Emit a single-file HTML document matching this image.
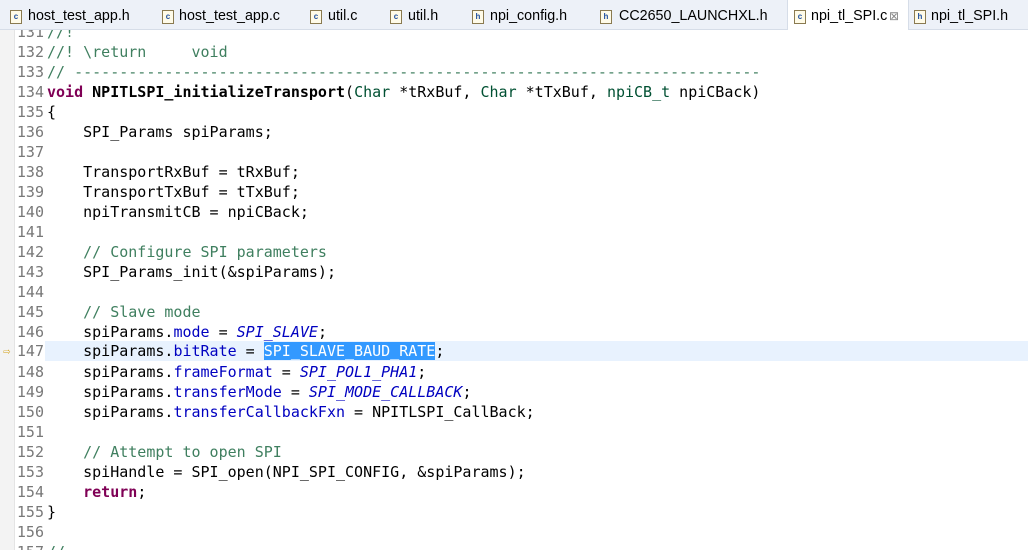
<!DOCTYPE html>
<html><head><meta charset="utf-8"><style>
body{margin:0;width:1028px;height:550px;overflow:hidden;background:#fff;position:relative;font-family:"DejaVu Sans Mono",monospace}
.tabs{position:absolute;left:0;top:0;width:1028px;height:29px;background:#edf1f8;border-bottom:1px solid #d6dde8}
.tab{position:absolute;top:0;height:29px;font:14.3px "Liberation Sans",sans-serif;color:#000;line-height:33px}
.ic{position:absolute;top:10px;width:10px;height:12px;border:1px solid #8a7a50;background:#fffbe8;font:bold 8px "Liberation Sans";line-height:12px;text-align:center;color:#2050a0}
.active{background:#fff;height:30px;border-left:1px solid #d6dde8;border-right:1px solid #d6dde8}
.ed{position:absolute;left:0;top:30px;width:1028px;height:520px;overflow:hidden}
.gut{position:absolute;left:0;top:0;width:14px;height:520px;background:#f3f3f3;border-right:1px solid #e4e4e4}
.l{position:absolute;left:0;height:20px;line-height:20px;font-size:15px;white-space:pre;width:1028px}
.n{position:absolute;left:16px;width:28px;text-align:right;color:#787878}
.c{position:absolute;left:47px;color:#000}
.cm{color:#3f7f5f}.kw{color:#7f0055;font-weight:bold}.ty{color:#005032}.m{color:#0000c0;font-style:italic}.f{color:#0000c0}
.sel{background:#3399ff;color:#fff}
</style></head><body>
<div class="tabs">
<div class="tab" style="left:0"><span class="ic" style="left:10px">c</span><span style="position:absolute;left:28px">host_test_app.h</span></div>
<div class="tab" style="left:152px"><span class="ic" style="left:10px">c</span><span style="position:absolute;left:27px">host_test_app.c</span></div>
<div class="tab" style="left:300px"><span class="ic" style="left:10px">c</span><span style="position:absolute;left:28px">util.c</span></div>
<div class="tab" style="left:380px"><span class="ic" style="left:10px">c</span><span style="position:absolute;left:28px">util.h</span></div>
<div class="tab" style="left:462px"><span class="ic" style="left:10px">h</span><span style="position:absolute;left:28px;white-space:nowrap">npi_config.h</span></div>
<div class="tab" style="left:590px"><span class="ic" style="left:10px">h</span><span style="position:absolute;left:29px;white-space:nowrap">CC2650_LAUNCHXL.h</span></div>
<div class="tab active" style="left:787px;width:120px"><span class="ic" style="left:6px">c</span><span style="position:absolute;left:23px;white-space:nowrap">npi_tl_SPI.c</span><span style="position:absolute;left:101px;color:#888;font-size:12px">⊠</span></div>
<div class="tab" style="left:908px"><span class="ic" style="left:6px">h</span><span style="position:absolute;left:23px;white-space:nowrap">npi_tl_SPI.h</span></div>
</div>
<div class="ed">
<div class="gut"></div>
<div class="l" style="top:311px;left:45px;width:983px;background:#e8f2fe"></div>
<div class="l" style="top:-8px"><span class="n">131</span><span class="c cm">//!</span></div>
<div class="l" style="top:12px"><span class="n">132</span><span class="c cm">//! \return     void</span></div>
<div class="l" style="top:32px"><span class="n">133</span><span class="c cm">// ----------------------------------------------------------------------------</span></div>
<div class="l" style="top:52px"><span class="n">134</span><span class="c"><span class="kw">void</span> <b>NPITLSPI_initializeTransport</b>(<span class="ty">Char</span> *tRxBuf, <span class="ty">Char</span> *tTxBuf, <span class="ty">npiCB_t</span> npiCBack)</span></div>
<div class="l" style="top:72px"><span class="n">135</span><span class="c">{</span></div>
<div class="l" style="top:92px"><span class="n">136</span><span class="c">    SPI_Params spiParams;</span></div>
<div class="l" style="top:112px"><span class="n">137</span></div>
<div class="l" style="top:132px"><span class="n">138</span><span class="c">    TransportRxBuf = tRxBuf;</span></div>
<div class="l" style="top:152px"><span class="n">139</span><span class="c">    TransportTxBuf = tTxBuf;</span></div>
<div class="l" style="top:172px"><span class="n">140</span><span class="c">    npiTransmitCB = npiCBack;</span></div>
<div class="l" style="top:192px"><span class="n">141</span></div>
<div class="l" style="top:212px"><span class="n">142</span><span class="c">    <span class="cm">// Configure SPI parameters</span></span></div>
<div class="l" style="top:232px"><span class="n">143</span><span class="c">    SPI_Params_init(&amp;spiParams);</span></div>
<div class="l" style="top:252px"><span class="n">144</span></div>
<div class="l" style="top:272px"><span class="n">145</span><span class="c">    <span class="cm">// Slave mode</span></span></div>
<div class="l" style="top:292px"><span class="n">146</span><span class="c">    spiParams.<span class="f">mode</span> = <span class="m">SPI_SLAVE</span>;</span></div>
<div class="l" style="top:311px"><span style="position:absolute;left:3px;color:#d4a017;font-size:12px">⇨</span><span class="n">147</span><span class="c">    spiParams.<span class="f">bitRate</span> = <span class="sel">SPI_SLAVE_BAUD_RATE</span>;</span></div>
<div class="l" style="top:332px"><span class="n">148</span><span class="c">    spiParams.<span class="f">frameFormat</span> = <span class="m">SPI_POL1_PHA1</span>;</span></div>
<div class="l" style="top:352px"><span class="n">149</span><span class="c">    spiParams.<span class="f">transferMode</span> = <span class="m">SPI_MODE_CALLBACK</span>;</span></div>
<div class="l" style="top:372px"><span class="n">150</span><span class="c">    spiParams.<span class="f">transferCallbackFxn</span> = NPITLSPI_CallBack;</span></div>
<div class="l" style="top:392px"><span class="n">151</span></div>
<div class="l" style="top:412px"><span class="n">152</span><span class="c">    <span class="cm">// Attempt to open SPI</span></span></div>
<div class="l" style="top:432px"><span class="n">153</span><span class="c">    spiHandle = SPI_open(NPI_SPI_CONFIG, &amp;spiParams);</span></div>
<div class="l" style="top:452px"><span class="n">154</span><span class="c">    <span class="kw">return</span>;</span></div>
<div class="l" style="top:472px"><span class="n">155</span><span class="c">}</span></div>
<div class="l" style="top:492px"><span class="n">156</span></div>
<div class="l" style="top:512px"><span class="n">157</span><span class="c cm">//</span></div>
</div>
</body></html>
